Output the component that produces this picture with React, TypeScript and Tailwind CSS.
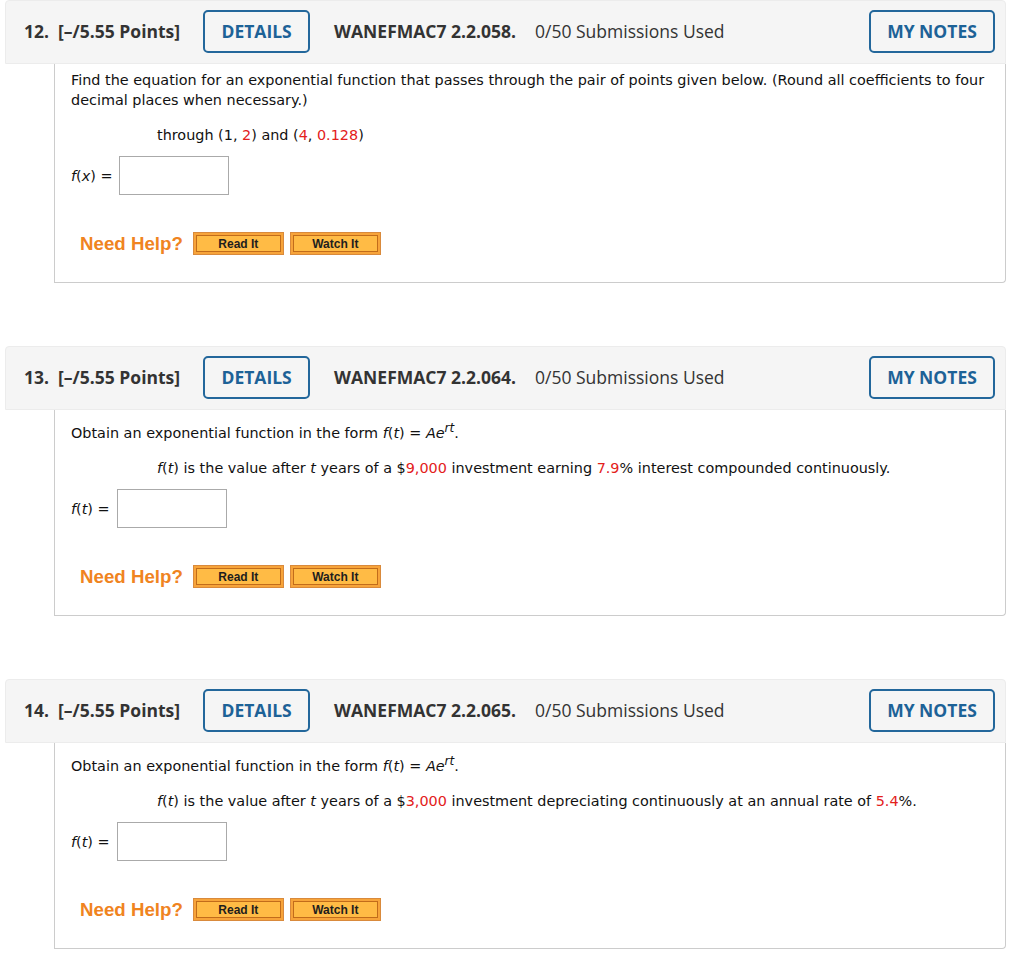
import type { ReactNode } from "react";

type QuestionProps = {
  num: number;
  code: string;
  first?: boolean;
  children: ReactNode;
  answerLabel: ReactNode;
  topPad: string;
};

const Red = ({ children }: { children: ReactNode }) => <span className="text-[#e3201b]">{children}</span>;

function HelpButton({ label }: { label: string }) {
  return (
    <button className="h-[23px] w-[91px] border border-[#d98a3c] bg-[#f7a43a] p-[2px]">
      <span className="flex h-full w-full items-center justify-center border border-[#c26c1a] bg-[#ffbb45] text-[12px] font-bold text-[#1e1e1e] [font-family:'Liberation_Sans',Arial,sans-serif]">
        {label}
      </span>
    </button>
  );
}

function Question({ num, code, first, children, answerLabel, topPad }: QuestionProps) {
  return (
    <section className={first ? "" : "mt-[63px]"}>
      <div className="mx-[5px] mr-[18px] flex h-[64px] items-center rounded-t border border-[#ececec] bg-[#f5f5f5] pb-[2px] pl-[18px] pr-[10px] text-[#333] [font-family:'Open_Sans',sans-serif]">
        <span className="text-[17.5px] font-bold">{num}.</span>
        <span className="ml-[9px] text-[17.5px] font-bold">[–/5.55 Points]</span>
        <button className="ml-[23px] h-[43px] w-[107px] rounded-[5px] border-2 border-[#23679b] text-[17.5px] font-bold text-[#1d6297]">
          DETAILS
        </button>
        <span className="ml-[24px] text-[17.5px] font-bold">{code}</span>
        <span className="ml-[19px] text-[17.5px]">0/50 Submissions Used</span>
        <button className="ml-auto h-[43px] w-[126px] rounded-[5px] border-2 border-[#23679b] text-[17.5px] font-bold text-[#1d6297]">
          MY NOTES
        </button>
      </div>
      <div
        className={`ml-[54px] mr-[18px] rounded-br border border-t-0 border-[#cccccc] pb-[27px] pl-[16px] pr-[16px] text-[14.4px] leading-[20px] text-[#111] [font-family:'DejaVu_Sans',Verdana,sans-serif] ${topPad}`}
      >
        {children}
        <div className="mt-[11px] flex h-[39px] items-center">
          <span>{answerLabel}</span>
          <span className="ml-[7px] h-[39px] w-[110px] border border-[#aaaaaa] bg-white" />
        </div>
        <div className="mt-[37px] flex items-center pl-[9px]">
          <span className="text-[18.7px] font-bold text-[#f0841f] [font-family:'Liberation_Sans',Arial,sans-serif]">Need Help?</span>
          <span className="ml-[10px] flex gap-[6px]">
            <HelpButton label="Read It" />
            <HelpButton label="Watch It" />
          </span>
        </div>
      </div>
    </section>
  );
}

const Form = () => (
  <>
    Obtain an exponential function in the form <i>f</i>(<i>t</i>) = <i>Ae</i>
    <sup className="text-[12px] italic">rt</sup>.
  </>
);

const Ft = () => (
  <>
    <i>f</i>(<i>t</i>) =
  </>
);

export default function App() {
  return (
    <div className="min-h-screen w-[1024px] bg-white pb-[18px]">
      <Question
        num={12}
        code="WANEFMAC7 2.2.058."
        first
        topPad="pt-[6px]"
        answerLabel={
          <>
            <i>f</i>(<i>x</i>) =
          </>
        }
      >
        <p>
          Find the equation for an exponential function that passes through the pair of points given below. (Round all coefficients to four
          decimal places when necessary.)
        </p>
        <p className="mt-[15px] pl-[86px]">
          through (1, <Red>2</Red>) and (<Red>4</Red>, <Red>0.128</Red>)
        </p>
      </Question>

      <Question num={13} code="WANEFMAC7 2.2.064." topPad="pt-[13px]" answerLabel={<Ft />}>
        <p>
          <Form />
        </p>
        <p className="mt-[15px] pl-[86px]">
          <i>f</i>(<i>t</i>) is the value after <i>t</i> years of a $<Red>9,000</Red> investment earning <Red>7.9</Red>% interest
          compounded continuously.
        </p>
      </Question>

      <Question num={14} code="WANEFMAC7 2.2.065." topPad="pt-[13px]" answerLabel={<Ft />}>
        <p>
          <Form />
        </p>
        <p className="mt-[15px] pl-[86px]">
          <i>f</i>(<i>t</i>) is the value after <i>t</i> years of a $<Red>3,000</Red> investment depreciating continuously at an annual
          rate of <Red>5.4</Red>%.
        </p>
      </Question>
    </div>
  );
}
